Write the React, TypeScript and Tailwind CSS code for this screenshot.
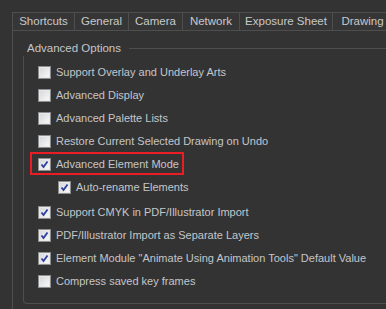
import React from "react";

const tabs = [
  { label: "Shortcuts", w: "w-[62px]" },
  { label: "General", w: "w-[54px]" },
  { label: "Camera", w: "w-[54px]" },
  { label: "Network", w: "w-[57px]" },
  { label: "Exposure Sheet", w: "w-[93px]" },
  { label: "Drawing", w: "w-[60px]" },
];

function Box({ checked }: { checked?: boolean }) {
  return (
    <span className="relative w-[13px] h-[13px] shrink-0 border border-[#8d8e8f] bg-gradient-to-br from-[#d4d5d7] to-[#fbfbfb] shadow-[inset_0_0_0_1px_#e8e8e8]">
      {checked && (
        <svg viewBox="0 0 13 13" className="absolute -left-px -top-px w-[13px] h-[13px]">
          <path d="M3.5 6.5 L5.5 9 L9.5 3.5" fill="none" stroke="#2b3d9e" strokeWidth="1.8" />
        </svg>
      )}
    </span>
  );
}

function Row({
  label,
  checked,
  indent,
  extra = "",
  children,
}: {
  label: string;
  checked?: boolean;
  indent?: boolean;
  extra?: string;
  children?: React.ReactNode;
}) {
  return (
    <div className={`relative flex items-center h-[23px] gap-[5px] ${indent ? "pl-[34px]" : "pl-[14px]"} ${extra}`}>
      <Box checked={checked} />
      <span className="whitespace-nowrap">{label}</span>
      {children}
    </div>
  );
}

export default function App() {
  return (
    <div
      className="w-[386px] h-[309px] overflow-hidden bg-[#333333] pt-[12px] pl-[12px] text-[11px] text-[#c4c6ca] leading-none"
      style={{ fontFamily: '"Liberation Sans", Arial, sans-serif' }}
    >
      {/* Tabs */}
      <div className="flex h-[18px]">
        {tabs.map((t) => (
          <div
            key={t.label}
            className={`${t.w} shrink-0 flex items-center justify-center border-t border-l border-[#4e4e4e] bg-[#363636] text-[#c8c9cb] text-[11.5px] whitespace-nowrap`}
          >
            {t.label}
          </div>
        ))}
      </div>

      {/* Panel */}
      <div className="border-t border-l border-[#4e4e4e] h-full pl-[10px] pt-[11px]">
        <div className="flex items-center h-[14px]">
          <span className="pl-[4px] pr-[8px] text-[11.5px] whitespace-nowrap">Advanced Options</span>
          <span className="flex-1 h-px bg-[#4e4e4e] -mt-[2px]" />
        </div>
        <div className="h-[248px] border-l border-b border-[#4e4e4e] rounded-bl-[4px] pt-[5px]">
          <Row label="Support Overlay and Underlay Arts" />
          <Row label="Advanced Display" />
          <Row label="Advanced Palette Lists" />
          <Row label="Restore Current Selected Drawing on Undo" />
          <Row label="Advanced Element Mode" checked>
            <span className="absolute left-[6px] -top-px w-[154px] h-[23px] border-[2.5px] border-[#ea1c24]" />
          </Row>
          <Row label="Auto-rename Elements" checked indent />
          <Row label="Support CMYK in PDF/Illustrator Import" checked extra="mt-[2px]" />
          <Row label="PDF/Illustrator Import as Separate Layers" checked />
          <Row label={'Element Module "Animate Using Animation Tools" Default Value'} checked />
          <Row label="Compress saved key frames" />
        </div>
      </div>
    </div>
  );
}
